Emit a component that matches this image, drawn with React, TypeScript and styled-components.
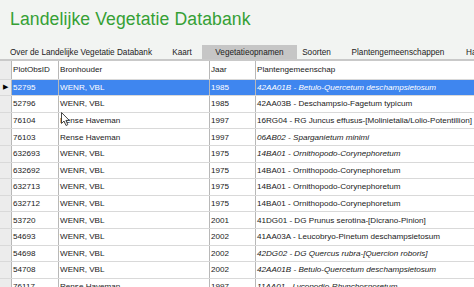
import styled, { createGlobalStyle } from 'styled-components';

const GlobalStyle = createGlobalStyle`
  html, body {
    margin: 0;
    padding: 0;
    background: #f2f4f2;
    overflow: hidden;
  }
  * { box-sizing: border-box; }
`;

const Page = styled.div`
  position: relative;
  width: 474px;
  height: 287px;
  overflow: hidden;
  font-family: "Liberation Sans", Arial, sans-serif;
  background: #f2f4f2;
`;

const Header = styled.header`
  height: 45px;
  padding: 4px 0 0 10px;
`;

const Title = styled.h1`
  margin: 0;
  font-size: 17.6px;
  font-weight: normal;
  color: #35a035;
  line-height: 30px;
  letter-spacing: 0.1px;
`;

const TabBar = styled.nav`
  display: flex;
  height: 16px;
  border-bottom: 2px solid #c9c9c9;
  white-space: nowrap;
`;

const Tab = styled.div<{ $active?: boolean; $w: number; $start?: boolean }>`
  flex: 0 0 ${({ $w }) => $w}px;
  display: flex;
  align-items: center;
  justify-content: ${({ $start }) => ($start ? 'flex-start' : 'center')};
  padding-left: ${({ $start }) => ($start ? '6px' : '0')};
  font-size: 8.2px;
  color: #222;
  background: ${({ $active }) => ($active ? '#c6c6c6' : 'transparent')};
`;

const Grid = styled.div`
  background: #fff;
  height: 226px;
`;

const Row = styled.div<{ $head?: boolean; $selected?: boolean }>`
  display: grid;
  grid-template-columns: 12px 47px 151px 46px 1fr;
  height: ${({ $head }) => ($head ? '18.6px' : '16.6px')};
  border-bottom: 1px solid #d9d9d9;
  background: ${({ $selected }) => ($selected ? '#3f86ef' : '#fff')};
  color: ${({ $selected }) => ($selected ? '#fff' : '#1a1a1a')};
`;

const Cell = styled.div<{ $italic?: boolean }>`
  display: flex;
  align-items: center;
  padding-left: 1px;
  font-size: 8.1px;
  font-style: ${({ $italic }) => ($italic ? 'italic' : 'normal')};
  border-right: 1px solid #b8b8b8;
  white-space: nowrap;
  overflow: hidden;
  &:last-child { border-right: none; }
`;

const Selector = styled.div`
  display: flex;
  align-items: center;
  justify-content: center;
  background: #ececec;
  border-right: 1px solid #b8b8b8;
  font-size: 7px;
  color: #000;
`;

const Cursor = styled.svg`
  position: absolute;
  left: 61px;
  top: 112px;
`;

type Rec = { id: string; owner: string; year: string; plant: string; italic?: boolean };

const rows: Rec[] = [
  { id: '52795', owner: 'WENR, VBL', year: '1985', plant: '42AA01B - Betulo-Quercetum deschampsietosum', italic: true },
  { id: '52796', owner: 'WENR, VBL', year: '1985', plant: '42AA03B - Deschampsio-Fagetum typicum' },
  { id: '76104', owner: 'Rense Haveman', year: '1997', plant: '16RG04 - RG Juncus effusus-[Molinietalia/Lolio-Potentillion]' },
  { id: '76103', owner: 'Rense Haveman', year: '1997', plant: '06AB02 - Sparganietum minimi', italic: true },
  { id: '632693', owner: 'WENR, VBL', year: '1975', plant: '14BA01 - Ornithopodo-Corynephoretum', italic: true },
  { id: '632692', owner: 'WENR, VBL', year: '1975', plant: '14BA01 - Ornithopodo-Corynephoretum' },
  { id: '632713', owner: 'WENR, VBL', year: '1975', plant: '14BA01 - Ornithopodo-Corynephoretum' },
  { id: '632712', owner: 'WENR, VBL', year: '1975', plant: '14BA01 - Ornithopodo-Corynephoretum' },
  { id: '53720', owner: 'WENR, VBL', year: '2001', plant: '41DG01 - DG Prunus serotina-[Dicrano-Pinion]' },
  { id: '54693', owner: 'WENR, VBL', year: '2002', plant: '41AA03A - Leucobryo-Pinetum deschampsietosum' },
  { id: '54698', owner: 'WENR, VBL', year: '2002', plant: '42DG02 - DG Quercus rubra-[Quercion roboris]', italic: true },
  { id: '54708', owner: 'WENR, VBL', year: '2002', plant: '42AA01B - Betulo-Quercetum deschampsietosum', italic: true },
  { id: '76117', owner: 'Rense Haveman', year: '1997', plant: '11AA01 - Lycopodio-Rhynchosporetum', italic: true },
];

const tabs = [
  { label: 'Over de Landelijke Vegetatie Databank', w: 162 },
  { label: 'Kaart', w: 40 },
  { label: 'Vegetatieopnamen', w: 95, active: true },
  { label: 'Soorten', w: 39 },
  { label: 'Plantengemeenschappen', w: 124 },
  { label: 'Habitattypen', w: 60, start: true },
];

export default function App() {
  return (
    <Page>
      <GlobalStyle />
      <Header>
        <Title>Landelijke Vegetatie Databank</Title>
      </Header>
      <TabBar>
        {tabs.map(t => (
          <Tab key={t.label} $w={t.w} $active={t.active} $start={t.start}>{t.label}</Tab>
        ))}
      </TabBar>
      <Grid>
        <Row $head>
          <Selector />
          <Cell>PlotObsID</Cell>
          <Cell>Bronhouder</Cell>
          <Cell>Jaar</Cell>
          <Cell>Plantengemeenschap</Cell>
        </Row>
        {rows.map((r, i) => (
          <Row key={r.id} $selected={i === 0}>
            <Selector>{i === 0 ? '▶' : ''}</Selector>
            <Cell>{r.id}</Cell>
            <Cell>{r.owner}</Cell>
            <Cell>{r.year}</Cell>
            <Cell $italic={r.italic}>{r.plant}</Cell>
          </Row>
        ))}
      </Grid>
      <Cursor width="10" height="15" viewBox="0 0 10 15">
        <path d="M0.5 0.5 L0.5 11.5 L3 9 L5 13.5 L6.8 12.7 L4.9 8.4 L8.3 8.4 Z" fill="#fff" stroke="#333" strokeWidth="0.9" />
      </Cursor>
    </Page>
  );
}
